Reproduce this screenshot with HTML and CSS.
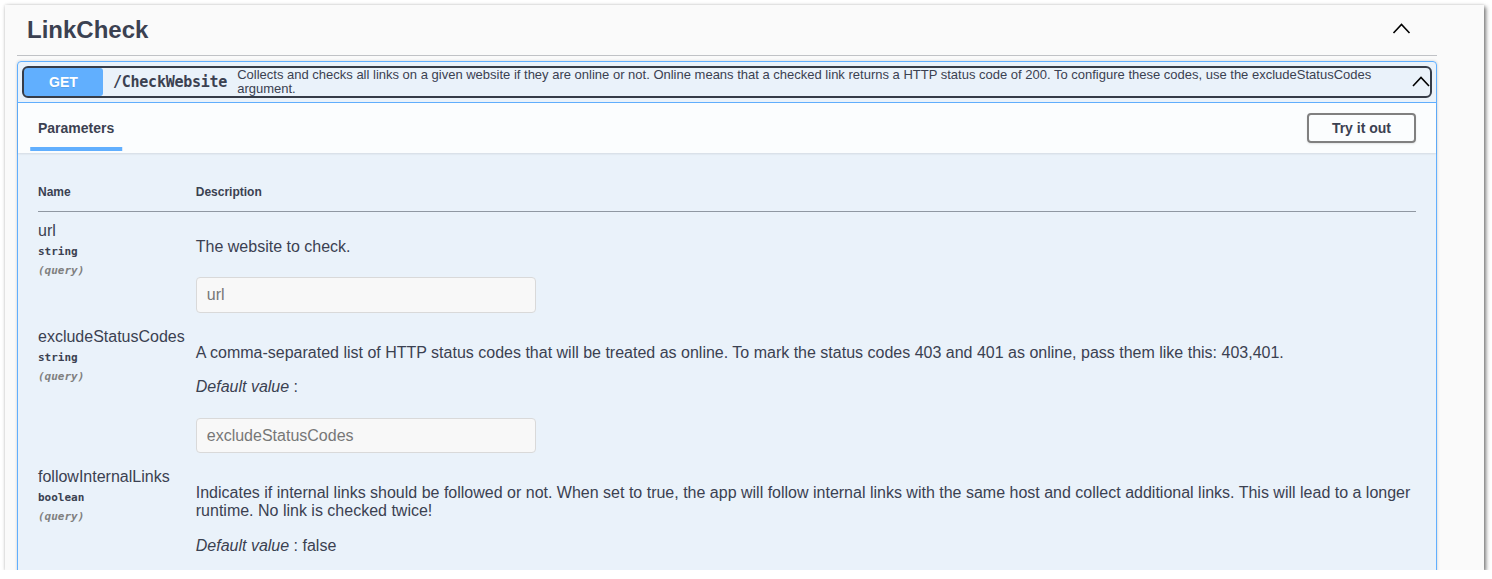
FILE: index.html
```html
<!DOCTYPE html>
<html lang="en">
<head>
<meta charset="utf-8">
<title>LinkCheck</title>
<link rel="stylesheet" href="styles.css">
</head>
<body>
<div class="frame">
  <div class="swagger">
    <div class="tag">
      <h3 class="tag-title">LinkCheck</h3>
      <svg class="tag-arrow" width="20" height="20" viewBox="0 0 20 20"><polyline points="1.5,13 9.5,4.5 17.5,13" fill="none" stroke="#000" stroke-width="1.6"/></svg>
    </div>
    <div class="opblock">
      <div class="summary">
        <div class="summary-control">
          <span class="method">GET</span>
          <span class="path">/CheckWebsite</span>
          <div class="summary-desc">Collects and checks all links on a given website if they are online or not. Online means that a checked link returns a HTTP status code of 200. To configure these codes, use the excludeStatusCodes argument.</div>
          <svg class="summary-arrow" width="20" height="20" viewBox="0 0 20 20"><polyline points="3,14 11,5.5 19,14" fill="none" stroke="#000" stroke-width="1.6"/></svg>
        </div>
      </div>
      <div class="section-header">
        <h4 class="tab-title"><span>Parameters</span></h4>
        <button class="try-out">Try it out</button>
      </div>
      <div class="table-container">
        <table class="parameters">
          <thead>
            <tr><th class="col-name">Name</th><th class="col-desc">Description</th></tr>
          </thead>
          <tbody>
            <tr>
              <td class="col-name">
                <div class="param-name">url</div>
                <div class="param-type">string</div>
                <div class="param-in">(query)</div>
              </td>
              <td class="col-desc">
                <p>The website to check.</p>
                <div class="input-wrap"><input class="param-input" type="text" placeholder="url"></div>
              </td>
            </tr>
            <tr>
              <td class="col-name">
                <div class="param-name">excludeStatusCodes</div>
                <div class="param-type">string</div>
                <div class="param-in">(query)</div>
              </td>
              <td class="col-desc">
                <p>A comma-separated list of HTTP status codes that will be treated as online. To mark the status codes 403 and 401 as online, pass them like this: 403,401.</p>
                <p><i>Default value</i> : </p>
                <div class="input-wrap"><input class="param-input" type="text" placeholder="excludeStatusCodes"></div>
              </td>
            </tr>
            <tr>
              <td class="col-name">
                <div class="param-name">followInternalLinks</div>
                <div class="param-type">boolean</div>
                <div class="param-in">(query)</div>
              </td>
              <td class="col-desc">
                <p>Indicates if internal links should be followed or not. When set to true, the app will follow internal links with the same host and collect additional links. This will lead to a longer runtime. No link is checked twice!</p>
                <p><i>Default value</i> : false</p>
              </td>
            </tr>
          </tbody>
        </table>
      </div>
    </div>
  </div>
</div>
</body>
</html>
```
FILE: styles.css
```css
* { box-sizing: border-box; }
html, body { margin: 0; padding: 0; background: #fff; }
body { font-family: "Liberation Sans", Arial, sans-serif; color: #3b4151; }

.frame {
  margin: 5px 0 0 5px;
  width: 1479px;
  height: 565px;
  background: #fafafa;
  overflow: hidden;
  box-shadow: 2px 2px 4px rgba(0,0,0,.5), 0 0 3px rgba(0,0,0,.15);
}

.swagger {
  margin-left: 12px;
  width: 1420px;
}

.tag {
  display: flex;
  align-items: center;
  padding: 10px 20px 10px 10px;
  border-bottom: 1px solid rgba(59,65,81,.3);
  margin-bottom: 5px;
}
.tag-title {
  flex: 1;
  margin: 0;
  font-size: 24px;
  line-height: 30px;
  font-weight: 700;
  color: #3b4151;
}
.tag-arrow { margin-right: 5px; margin-top: -1px; }

.opblock {
  border: 1px solid #61affe;
  border-radius: 4px;
  background: rgba(97,175,254,.1);
  box-shadow: 0 0 3px rgba(0,0,0,.19);
}
.summary {
  padding: 6px;
  border-bottom: 1px solid #61affe;
}
.summary-control {
  display: flex;
  align-items: center;
  height: 28px;
  outline: 2px solid #363c48;
  border-radius: 4px;
}
.method {
  width: 79px;
  flex: none;
  padding: 6px 0;
  font-size: 14px;
  line-height: 16px;
  font-weight: 700;
  text-align: center;
  color: #fff;
  background: #61affe;
  border-radius: 3px;
  text-shadow: 0 1px 0 rgba(0,0,0,.1);
}
.path {
  flex: none;
  padding: 0 10px;
  font-family: "DejaVu Sans Mono", monospace;
  font-weight: 700;
  font-size: 15px;
  letter-spacing: -0.25px;
  color: #3b4151;
}
.summary-desc {
  flex: 1;
  font-size: 13px;
  line-height: 14px;
  color: #3b4151;
}
.summary-arrow { flex: none; margin-left: 4px; }

.section-header {
  display: flex;
  align-items: center;
  height: 50px;
  padding: 8px 20px;
  background: rgba(255,255,255,.8);
  box-shadow: 0 1px 2px rgba(0,0,0,.1);
}
.tab-title {
  flex: 1;
  margin: 0;
  font-size: 14px;
  line-height: 16px;
  font-weight: 700;
  color: #3b4151;
}
.tab-title span { position: relative; }
.tab-title span::after {
  content: "";
  position: absolute;
  left: 50%;
  bottom: -15px;
  width: 120%;
  height: 4px;
  transform: translateX(-50%);
  background: #61affe;
}
.try-out {
  padding: 5px 23px;
  border: 2px solid #808080;
  border-radius: 4px;
  background: transparent;
  box-shadow: 0 1px 2px rgba(0,0,0,.1);
  font-family: "Liberation Sans", Arial, sans-serif;
  font-size: 14px;
  line-height: 16px;
  font-weight: 700;
  color: #3b4151;
}

.table-container { padding: 20px; }
.parameters {
  width: 100%;
  border-collapse: collapse;
}
.parameters th {
  padding: 12px 0;
  font-size: 12px;
  font-weight: 700;
  text-align: left;
  color: #3b4151;
  border-bottom: 1px solid rgba(59,65,81,.3);
}
.parameters td { vertical-align: top; }
.parameters td.col-name { padding: 10px 0; min-width: 6em; }
.parameters td.col-desc { padding: 10px 0 0; width: 99%; }

.param-name {
  font-size: 16px;
  margin-right: 11px;
  color: #3b4151;
  white-space: nowrap;
}
.param-type {
  padding: 5px 0;
  font-family: "DejaVu Sans Mono", monospace;
  font-size: 11px;
  line-height: 14px;
  font-weight: 700;
  color: #3b4151;
}
.param-in {
  font-family: "DejaVu Sans Mono", monospace;
  font-size: 11px;
  line-height: 14px;
  font-weight: 700;
  font-style: italic;
  color: #808080;
}
.col-desc p {
  margin: 16px 0;
  font-size: 16px;
  line-height: 18.4px;
  color: #3b4151;
}
.input-wrap { display: flow-root; }
.param-input {
  display: block;
  width: 340px;
  margin: 5px 0;
  padding: 8px 10px;
  border: 1px solid #d9d9d9;
  border-radius: 4px;
  background: #f8f8f8;
  font-family: "Liberation Sans", Arial, sans-serif;
  font-size: 16px;
  line-height: 17.4px;
  color: #3b4151;
}
.param-input::placeholder { color: #777; }
```
